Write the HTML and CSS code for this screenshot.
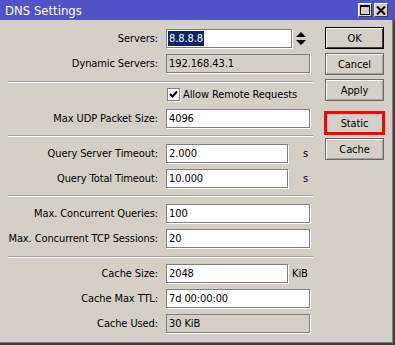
FILE: index.html
```html
<!DOCTYPE html>
<html>
<head>
<meta charset="utf-8">
<link rel="stylesheet" href="styles.css">
</head>
<body>
<div class="window">
  <div class="titlebar">
    <span class="title">DNS Settings</span>
    <div class="tbtns">
      <span class="tbtn"><svg width="10" height="10" viewBox="0 0 10 10"><rect x="0.5" y="0.5" width="9" height="9" fill="none" stroke="#000" stroke-width="1"/><rect x="0" y="0" width="10" height="2" fill="#000"/></svg></span>
      <span class="tbtn"><svg width="10" height="9" viewBox="0 0 10 9"><path d="M1 0.5 L9 8.5 M9 0.5 L1 8.5" stroke="#000" stroke-width="2" fill="none"/></svg></span>
    </div>
  </div>
  <div class="body">
    <div class="form">
      <div class="group">
        <div class="row"><span class="lbl">Servers:</span><span class="field w126"><span class="sel">8.8.8.8</span></span><span class="spin"><svg width="10" height="13" viewBox="0 0 10 13"><path d="M5 0 L10 5 L0 5 Z M0 8 L10 8 L5 13 Z" fill="#000"/></svg></span></div>
        <div class="row"><span class="lbl">Dynamic Servers:</span><span class="field ro w144">192.168.43.1</span></div>
      </div>
      <div class="sep s1"></div>
      <div class="row chkrow"><span class="lbl"></span><span class="chk"><svg width="11" height="11" viewBox="0 0 11 11"><path d="M2 5 L4.5 7.5 L9 2.5" stroke="#000" stroke-width="2" fill="none"/></svg></span><span class="chktext">Allow Remote Requests</span></div>
      <div class="row udp"><span class="lbl">Max UDP Packet Size:</span><span class="field w144">4096</span></div>
      <div class="sep"></div>
      <div class="group">
        <div class="row"><span class="lbl">Query Server Timeout:</span><span class="field w122">2.000</span><span class="unit us">s</span></div>
        <div class="row"><span class="lbl">Query Total Timeout:</span><span class="field w122">10.000</span><span class="unit us">s</span></div>
      </div>
      <div class="sep"></div>
      <div class="group">
        <div class="row"><span class="lbl">Max. Concurrent Queries:</span><span class="field w144">100</span></div>
        <div class="row"><span class="lbl">Max. Concurrent TCP Sessions:</span><span class="field w144">20</span></div>
      </div>
      <div class="sep s4"></div>
      <div class="group">
        <div class="row"><span class="lbl">Cache Size:</span><span class="field w122">2048</span><span class="unit">KiB</span></div>
        <div class="row"><span class="lbl">Cache Max TTL:</span><span class="field w144">7d 00:00:00</span></div>
        <div class="row"><span class="lbl">Cache Used:</span><span class="field ro w144">30 KiB</span></div>
      </div>
    </div>
    <div class="buttons">
      <div class="btn def">OK</div>
      <div class="btn">Cancel</div>
      <div class="btn">Apply</div>
      <div class="btn static">Static</div>
      <div class="btn">Cache</div>
    </div>
  </div>
</div>
</body>
</html>
```
FILE: styles.css
```css
* { box-sizing: border-box; }
body {
  margin: 0;
  width: 395px;
  height: 345px;
  overflow: hidden;
  background: #d4d0c8;
  font-family: "DejaVu Sans Condensed", "DejaVu Sans", "Liberation Sans", sans-serif;
  font-stretch: condensed;
  font-size: 11px;
  letter-spacing: -0.1px;
  color: #000;
}
.window {
  height: 345px;
  display: flex;
  flex-direction: column;
}
.titlebar {
  height: 20px;
  background: #4f53c7;
  color: #fff;
  display: flex;
  align-items: center;
  padding: 0 7px 0 5px;
}
.title {
  flex: 1;
  font-size: 13px;
  letter-spacing: 0;
}
.tbtns {
  display: flex;
  gap: 2px;
}
.tbtn {
  width: 14px;
  height: 14px;
  background: #d4d0c8;
  border: 1px solid;
  border-color: #fff #404040 #404040 #fff;
  display: flex;
  align-items: center;
  justify-content: center;
}
.body {
  flex: 1;
  display: flex;
  border-right: 2px solid #404040;
  border-bottom: 2px solid #404040;
  box-shadow: inset -1px -1px 0 #808080;
}
.form {
  width: 318px;
  padding-top: 9px;
}
.group {
  display: flex;
  flex-direction: column;
  gap: 6px;
}
.row {
  display: flex;
  align-items: center;
  height: 19px;
}
.lbl {
  width: 166px;
  flex: none;
  padding-right: 8px;
  text-align: right;
  white-space: nowrap;
}
.field {
  height: 19px;
  border: 1px solid #808080;
  box-shadow: 1px 1px 0 #fff;
  background: #fff;
  padding-left: 2px;
  display: flex;
  align-items: center;
  white-space: nowrap;
  overflow: hidden;
}
.field.ro { background: transparent; }
.w144 { width: 144px; }
.w126 { width: 126px; }
.w122 { width: 122px; }
.sel {
  background: #0a246a;
  color: #fff;
  height: 15px;
  display: inline-flex;
  align-items: center;
  padding: 0 1px;
  margin-left: -1px;
}
.spin {
  margin-left: 4px;
  display: flex;
}
.unit { margin-left: 4px; }
.unit.us { margin-left: 15px; }
.sep {
  margin: 7px 0 7px 8px;
  width: 305px;
  height: 2px;
  border-top: 1px solid #a0a0a0;
  border-bottom: 1px solid #fff;
}
.sep.s1 { margin: 8px 0 2px 8px; }
.sep.s4 { margin: 8px 0 6px 8px; }
.chkrow .lbl { width: 167px; padding: 0; }
.chk {
  width: 13px;
  height: 13px;
  border: 1px solid #808080;
  box-shadow: 1px 1px 0 #fff;
  background: #fff;
  display: flex;
  align-items: center;
  justify-content: center;
}
.chktext { margin-left: 3px; }
.udp { margin-top: 5px; }
.buttons {
  margin-left: 7px;
  padding-top: 7px;
  width: 59px;
  display: flex;
  flex-direction: column;
  gap: 4px;
}
.btn {
  height: 22px;
  border: 1px solid #6a6a6a;
  box-shadow: inset 1px 1px 0 #fff, inset -1px -1px 0 #a0a0a0;
  background: #d4d0c8;
  display: flex;
  align-items: center;
  justify-content: center;
}
.btn.def {
  border-color: #000;
  box-shadow: inset 1px 1px 0 #fff, inset -1px -1px 0 #404040;
}
.btn.static {
  margin-top: 7px;
  outline: 3px solid #ff0000;
  outline-offset: -2px;
}
```
